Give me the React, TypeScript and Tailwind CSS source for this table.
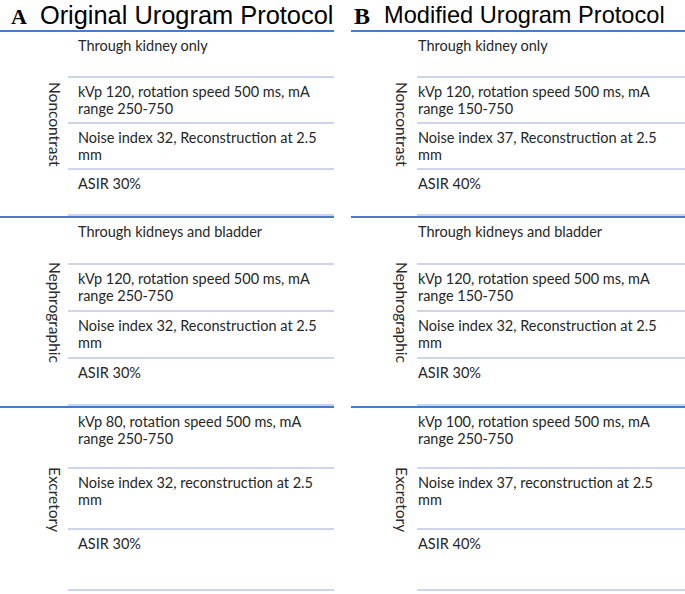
import React from "react";

type Section = { label: string; rows: string[]; rowH: string };

const colA: Section[] = [
  {
    label: "Noncontrast",
    rowH: "h-[44px]",
    rows: [
      "Through kidney only",
      "kVp 120, rotation speed 500 ms, mA range 250-750",
      "Noise index 32, Reconstruction at 2.5 mm",
      "ASIR 30%",
    ],
  },
  {
    label: "Nephrographic",
    rowH: "h-[45px]",
    rows: [
      "Through kidneys and bladder",
      "kVp 120, rotation speed 500 ms, mA range 250-750",
      "Noise index 32, Reconstruction at 2.5 mm",
      "ASIR 30%",
    ],
  },
  {
    label: "Excretory",
    rowH: "h-[59px]",
    rows: [
      "kVp 80, rotation speed 500 ms, mA range 250-750",
      "Noise index 32, reconstruction at 2.5 mm",
      "ASIR 30%",
    ],
  },
];

const colB: Section[] = [
  {
    label: "Noncontrast",
    rowH: "h-[44px]",
    rows: [
      "Through kidney only",
      "kVp 120, rotation speed 500 ms, mA range 150-750",
      "Noise index 37, Reconstruction at 2.5 mm",
      "ASIR 40%",
    ],
  },
  {
    label: "Nephrographic",
    rowH: "h-[45px]",
    rows: [
      "Through kidneys and bladder",
      "kVp 120, rotation speed 500 ms, mA range 150-750",
      "Noise index 32, Reconstruction at 2.5 mm",
      "ASIR 30%",
    ],
  },
  {
    label: "Excretory",
    rowH: "h-[59px]",
    rows: [
      "kVp 100, rotation speed 500 ms, mA range 250-750",
      "Noise index 37, reconstruction at 2.5 mm",
      "ASIR 40%",
    ],
  },
];

function Column({
  letter,
  title,
  sections,
  labelW,
  labelPr,
  textPad,
  headerCls,
  letterCls,
  titleCls,
}: {
  letter: string;
  title: string;
  sections: Section[];
  labelW: string;
  labelPr: string;
  textPad: string;
  headerCls: string;
  letterCls: string;
  titleCls: string;
}) {
  return (
    <div className="w-[334px] flex flex-col">
      <div className={`h-[30px] flex items-end pb-[2px] text-black ${headerCls}`}>
        <span className={`font-['Liberation_Serif',serif] font-bold leading-none ${letterCls}`}>
          {letter}
        </span>
        <span className={`font-['Liberation_Sans',Arial,sans-serif] leading-none ${titleCls}`}>
          {title}
        </span>
      </div>
      {sections.map((s, i) => (
        <div key={i} className="flex border-t-2 border-[#4a7ad0]">
          <div className={`${labelW} flex items-center justify-end ${labelPr}`}>
            <span className="[writing-mode:vertical-rl] font-['Lato',sans-serif] text-[15.5px] leading-[17px] text-[#2a2a2a]">
              {s.label}
            </span>
          </div>
          <div className="flex-1 flex flex-col">
            {s.rows.map((r, j) => (
              <div
                key={j}
                className={`${s.rowH} box-content border-b-2 border-[#cdd5eb] ${textPad}`}
              >
                <div className="pt-[5px] font-['Lato',sans-serif] text-[14.5px] leading-[17px] text-[#262626]">
                  {r}
                </div>
              </div>
            ))}
          </div>
        </div>
      ))}
    </div>
  );
}

export default function App() {
  return (
    <div className="w-[685px] h-[594px] bg-white flex gap-[17px]">
      <Column
        letter="A"
        title="Original Urogram Protocol"
        sections={colA}
        labelW="w-[68px]"
        labelPr="pr-[5px]"
        textPad="pl-[10px] pr-[4px]"
        headerCls="pl-[11px] gap-[13px]"
        letterCls="text-[22px]"
        titleCls="text-[25.4px]"
      />
      <Column
        letter="B"
        title="Modified Urogram Protocol"
        sections={colB}
        labelW="w-[66px]"
        labelPr="pr-[7px]"
        textPad="pl-[1px] pr-[18px]"
        headerCls="pl-[3px] gap-[14px]"
        letterCls="text-[24px]"
        titleCls="text-[23.6px]"
      />
    </div>
  );
}
